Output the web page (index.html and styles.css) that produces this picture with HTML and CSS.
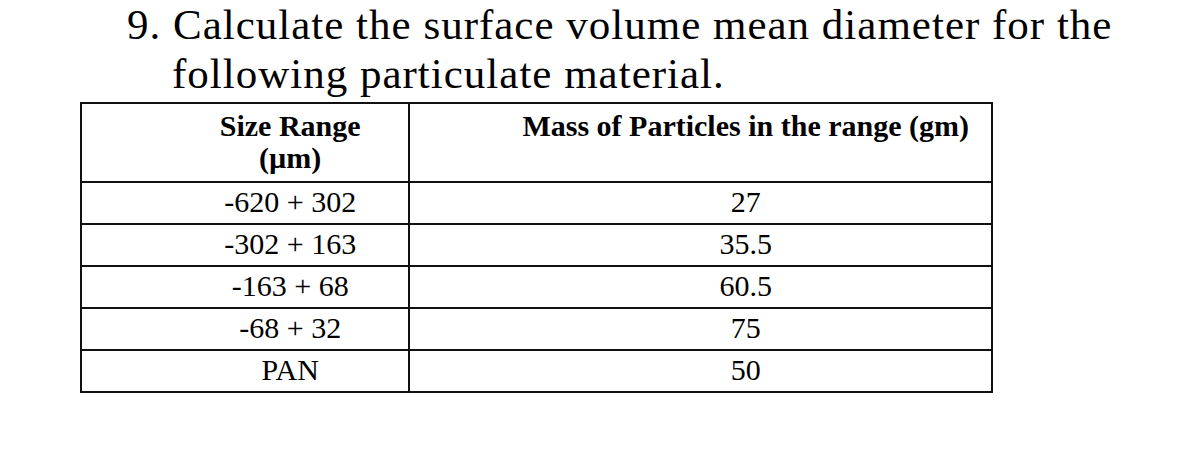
FILE: index.html
```html
<!DOCTYPE html>
<html lang="en">
<head>
  <meta charset="UTF-8" />
  <title>Surface volume mean diameter</title>
  <link rel="stylesheet" href="styles.css">
</head>
<body>
  <div class="question">
    <p class="prompt">9. Calculate the surface volume mean diameter for the following particulate material.</p>

    <table class="sizes">
      <thead>
        <tr>
          <th class="col-range">Size Range<br />(µm)</th>
          <th class="col-mass">Mass of Particles in the range (gm)</th>
        </tr>
      </thead>
      <tbody>
        <tr><td>-620 + 302</td><td>27</td></tr>
        <tr><td>-302 + 163</td><td>35.5</td></tr>
        <tr><td>-163 + 68</td><td>60.5</td></tr>
        <tr><td>-68 + 32</td><td>75</td></tr>
        <tr><td>PAN</td><td>50</td></tr>
      </tbody>
    </table>
  </div>
</body>
</html>
```

FILE: styles.css
```css
* {
  box-sizing: border-box;
  margin: 0;
  padding: 0;
}

body {
  font-family: 'Liberation Serif', 'Times New Roman', serif;
  background: #fff;
  color: #000;
}

.question {
  padding-left: 80px;
}

.prompt {
  font-size: 43px;
  line-height: 49px;
  letter-spacing: 1px;
  padding-left: 92px;
  text-indent: -45px;
  width: 1090px;
  margin-bottom: 4px;
}

.sizes {
  border-collapse: collapse;
  width: 913px;
}

.sizes th,
.sizes td {
  font-family: 'Liberation Serif', 'Times New Roman', serif;
  font-size: 30px;
  color: #000;
  border: 2px solid #111;
  text-align: center;
  padding-left: 90px;
}

.sizes th {
  height: 79px;
  vertical-align: top;
  font-weight: bold;
  line-height: 32px;
  padding-top: 6px;
}

.sizes td {
  height: 42px;
  line-height: 30px;
  padding-bottom: 3px;
  vertical-align: middle;
}

.col-range {
  width: 329px;
}

.col-mass {
  width: 584px;
}
```
